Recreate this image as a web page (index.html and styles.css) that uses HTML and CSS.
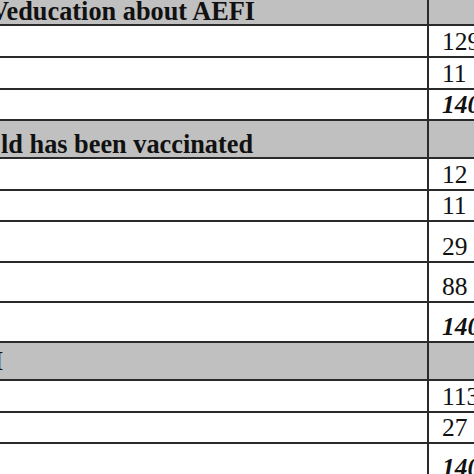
FILE: index.html
```html
<!DOCTYPE html>
<html lang="en">
<head>
<meta charset="utf-8">
<title>AEFI table</title>
<link rel="stylesheet" href="styles.css">
</head>
<body>
<table class="tbl">
  <colgroup><col class="c-label"><col class="c-num"></colgroup>
  <tbody>
    <tr class="r-head h38"><td class="lbl lbl-bottom"><span class="t1">Veducation about AEFI</span></td><td class="num"></td></tr>
    <tr class="h32"><td></td><td class="num">129</td></tr>
    <tr class="h32"><td></td><td class="num">11</td></tr>
    <tr class="h31"><td></td><td class="num total">140</td></tr>
    <tr class="r-head h38"><td class="lbl lbl-bottom"><span class="t2">ld has been vaccinated</span></td><td class="num"></td></tr>
    <tr class="h32"><td></td><td class="num">12</td></tr>
    <tr class="h31"><td></td><td class="num">11</td></tr>
    <tr class="h41"><td></td><td class="num">29</td></tr>
    <tr class="h40"><td></td><td class="num">88</td></tr>
    <tr class="h40"><td></td><td class="num total">140</td></tr>
    <tr class="r-head h38"><td class="lbl lbl-middle"><span class="t3">I</span></td><td class="num"></td></tr>
    <tr class="h32"><td></td><td class="num">113</td></tr>
    <tr class="h31"><td></td><td class="num">27</td></tr>
    <tr class="h40"><td></td><td class="num total">140</td></tr>
  </tbody>
</table>
</body>
</html>
```

FILE: styles.css
```css
html, body {
  margin: 0;
  padding: 0;
  background: #ffffff;
  overflow: hidden;
  width: 474px;
  height: 474px;
}

.tbl {
  border-collapse: collapse;
  table-layout: fixed;
  width: 520px;
  margin-top: -14px;
  font-family: "Liberation Serif", "Times New Roman", serif;
  color: #111111;
}

.c-label { width: 428px; }
.c-num { width: 92px; }

.tbl td {
  border-top: 2px solid #2a2a2a;
  border-bottom: 2px solid #2a2a2a;
  padding: 0;
  vertical-align: bottom;
  overflow: hidden;
  white-space: nowrap;
}

.tbl td.num {
  border-left: 2px solid #2a2a2a;
  font-size: 25.5px;
  line-height: 25px;
  padding: 0 0 2px 13px;
}

.tbl td.total {
  font-weight: bold;
  font-style: italic;
}

.r-head td {
  background: #c0c0c0;
}

.lbl {
  font-size: 26.3px;
  line-height: 25px;
  font-weight: bold;
}

.tbl td.lbl-bottom { vertical-align: bottom; }
.tbl td.lbl-middle { vertical-align: middle; }

.t1, .t2, .t3 { display: inline-block; }
.t1 { margin-left: -10px; }
.t2 { margin-left: 1px; }
.t3 { margin-left: -7px; }

.h31 { height: 31px; }
.h32 { height: 32px; }
.h38 { height: 38px; }
.h40 { height: 40px; }
.h41 { height: 41px; }
```
